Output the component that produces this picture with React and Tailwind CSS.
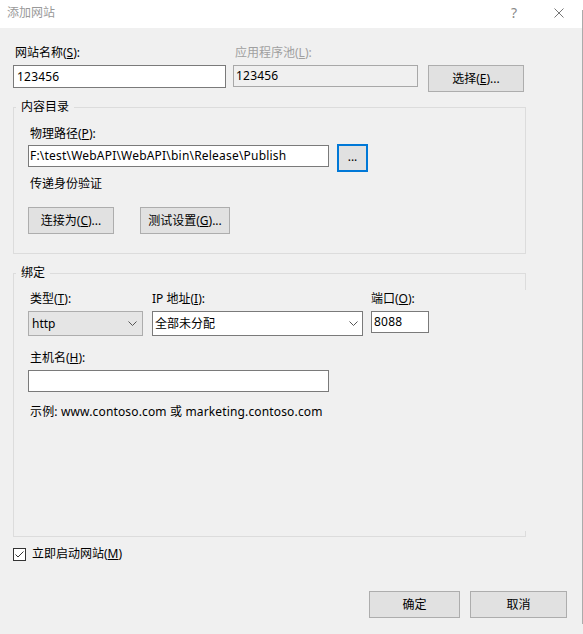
import React from "react";

function Chevron() {
  return (
    <svg width="9" height="5" viewBox="0 0 9 5" className="block">
      <polyline points="0.5,0.5 4.5,4.5 8.5,0.5" fill="none" stroke="#555" strokeWidth="1" />
    </svg>
  );
}

function Button({ className = "", children }) {
  return (
    <div
      className={
        "h-[27px] flex items-center justify-center bg-[#e1e1e1] border border-[#adadad] " + className
      }
    >
      {children}
    </div>
  );
}

export default function App() {
  return (
    <div className="relative w-[583px] h-[634px] overflow-hidden bg-[#f0f0f0] text-black text-[12px] leading-[16px] font-['Noto_Sans','Noto_Sans_CJK_SC',sans-serif]">
      {/* window edge */}
      <div className="absolute right-0 top-[10px] h-[614px] w-px bg-[#ababab]" />

      {/* title bar */}
      <div className="h-[28px] bg-white flex items-center pl-[7px] pr-[19px] pb-[2px]">
        <span className="text-[#999999]">添加网站</span>
        <span className="ml-auto w-[10px] text-center text-[14px] text-[#8a8a8a]">?</span>
        <svg width="10" height="10" viewBox="0 0 10 10" className="ml-[35px] block">
          <path d="M0.5 0.5 L9.5 9.5 M9.5 0.5 L0.5 9.5" stroke="#777" strokeWidth="1" fill="none" />
        </svg>
      </div>

      <div className="px-[13px]">
        {/* site name / app pool */}
        <div className="flex items-start mt-[17px]">
          <div className="w-[213px] flex flex-col">
            <div className="pl-[2px] mb-[4px]">
              网站名称(<u>S</u>):
            </div>
            <div className="h-[23px] flex items-center bg-white border border-[#7a7a7a] pl-[3px] tracking-[0.2px]">123456</div>
          </div>
          <div className="ml-[7px] w-[185px] flex flex-col">
            <div className="pl-[2px] mb-[4px] text-[#a0a0a0]">
              应用程序池(<u>L</u>):
            </div>
            <div className="h-[22px] flex items-center bg-[#f0f0f0] border border-[#a8a8a8] pl-[2px] tracking-[0.2px]">123456</div>
          </div>
          <Button className="ml-[10px] mt-[20px] w-[96px]">
            选择(<u>E</u>)...
          </Button>
        </div>

        {/* content directory */}
        <fieldset className="mt-[7px] w-[513px] border border-[#dcdcdc] m-0 p-0">
          <legend className="ml-[2px] px-[5px]">内容目录</legend>
          <div className="pl-[14px] pt-[11px] pb-[19px]">
            <div className="pl-[2px] mb-[3px]">
              物理路径(<u>P</u>):
            </div>
            <div className="flex items-start">
              <div className="w-[301px] h-[22px] flex items-center bg-white border border-[#7a7a7a] pl-[1px] whitespace-nowrap tracking-[0.2px]">
                F:\test\WebAPI\WebAPI\bin\Release\Publish
              </div>
              <div className="ml-[8px] mt-[-1px] w-[31px] h-[28px] flex items-center justify-center bg-[#e1e1e1] border-2 border-[#0078d7] pb-[2px]">
                ...
              </div>
            </div>
            <div className="pl-[2px] mt-[4px]">传递身份验证</div>
            <div className="flex mt-[15px]">
              <Button className="w-[86px]">
                连接为(<u>C</u>)...
              </Button>
              <Button className="ml-[26px] w-[90px]">
                测试设置(<u>G</u>)...
              </Button>
            </div>
          </div>
        </fieldset>

        {/* bindings */}
        <fieldset className="mt-[11px] w-[513px] border border-[#dcdcdc] m-0 p-0">
          <legend className="ml-[2px] px-[5px]">绑定</legend>
          <div className="relative pl-[14px] pt-[10px] pb-[116px]">
            <div className="absolute right-[-1px] top-[9px] bottom-[5px] w-px bg-[#f0f0f0]" />
            <div className="flex items-start">
              <div className="w-[115px] flex flex-col">
                <div className="pl-[2px] mb-[4px]">
                  类型(<u>T</u>):
                </div>
                <div className="h-[25px] flex items-center bg-[#e5e5e5] border border-[#adadad] pl-[3px] pr-[5px]">
                  <span>http</span>
                  <span className="ml-auto">
                    <Chevron />
                  </span>
                </div>
              </div>
              <div className="ml-[9px] w-[211px] flex flex-col">
                <div className="mb-[4px]">
                  IP 地址(<u>I</u>):
                </div>
                <div className="h-[25px] flex items-center bg-white border border-[#7a7a7a] pl-[2px] pr-[4px]">
                  <span>全部未分配</span>
                  <span className="ml-auto">
                    <Chevron />
                  </span>
                </div>
              </div>
              <div className="ml-[8px] w-[58px] flex flex-col">
                <div className="mb-[4px]">
                  端口(<u>O</u>):
                </div>
                <div className="h-[22px] flex items-center bg-white border border-[#7a7a7a] pl-[2px] tracking-[0.2px]">8088</div>
              </div>
            </div>
            <div className="pl-[2px] mt-[14px] mb-[4px]">
              主机名(<u>H</u>):
            </div>
            <div className="w-[301px] h-[22px] bg-white border border-[#7a7a7a]" />
            <div className="pl-[2px] mt-[12px] tracking-[0.15px]">示例: www.contoso.com 或 marketing.contoso.com</div>
          </div>
        </fieldset>

        {/* start immediately */}
        <div className="flex items-center mt-[9px]">
          <div className="w-[13px] h-[13px] bg-white border border-[#333333] flex items-center justify-center">
            <svg width="11" height="11" viewBox="0 0 11 11" className="block">
              <polyline points="1.5,5.5 4,8 9.5,2.5" fill="none" stroke="#333" strokeWidth="1" />
            </svg>
          </div>
          <span className="ml-[6px]">
            立即启动网站(<u>M</u>)
          </span>
        </div>

        {/* dialog buttons */}
        <div className="flex mt-[29px]">
          <Button className="ml-[356px] w-[91px]">确定</Button>
          <Button className="ml-[10px] w-[97px]">取消</Button>
        </div>
      </div>
    </div>
  );
}
